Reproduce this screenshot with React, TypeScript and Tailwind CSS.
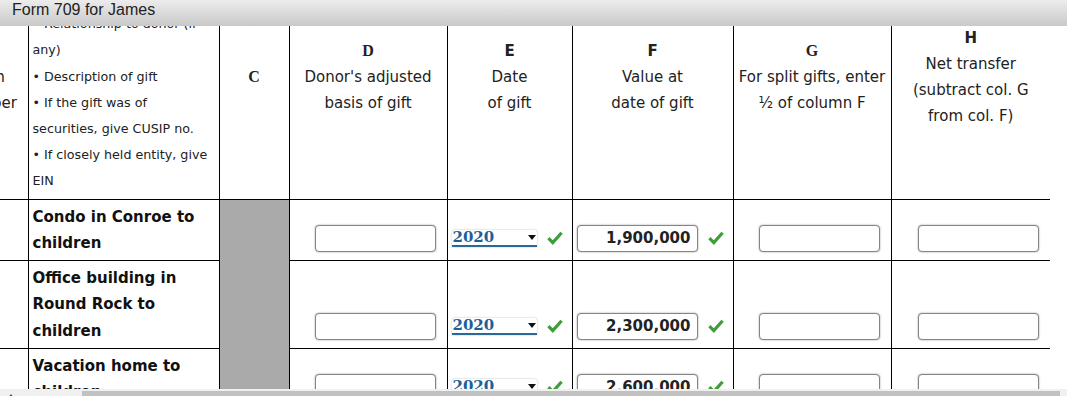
import React, { useLayoutEffect, useRef } from 'react';

type GiftRow = {
  lines: string[];
  value: string;
  height: string;
};

const gifts: GiftRow[] = [
  { lines: ['Condo in Conroe to', 'children'], value: '1,900,000', height: 'h-[61px]' },
  { lines: ['Office building in', 'Round Rock to', 'children'], value: '2,300,000', height: 'h-[88px]' },
  { lines: ['Vacation home to', 'children'], value: '2,600,000', height: 'h-[61px]' },
];

const Check = () => (
  <svg width="16" height="14" viewBox="0 0 16 14" className="shrink-0">
    <path d="M1.4 7.2 L5.8 11.6 L14.6 1.8" fill="none" stroke="#3f9d3a" strokeWidth="3.2" />
  </svg>
);

const Box = ({ value }: { value?: string }) => (
  <input
    readOnly
    value={value ?? ''}
    className="w-[121px] h-[27px] shrink-0 rounded-[4px] border border-[#858585] bg-white px-[6px] text-right text-[15px] font-bold text-[#222] shadow-[0_0_2px_rgba(0,0,0,0.4)] outline-none"
  />
);

const YearSelect = () => (
  <div className="flex w-[85px] h-[17px] shrink-0 items-center justify-between rounded-t-[3px] border-b-2 border-[#2b6797] bg-white shadow-[0_0_2px_rgba(0,0,0,0.3)]">
    <span className="pl-[1px] font-['DejaVu_Serif',serif] text-[15px] font-bold leading-none text-[#1d5f99]">
      2020
    </span>
    <svg width="8" height="5" viewBox="0 0 8 5" className="mr-[1px]">
      <path d="M0 0 H8 L4 5 Z" fill="#111" />
    </svg>
  </div>
);

const HeadCell = ({ letter, lines, serif }: { letter: string; lines: string[]; serif?: boolean }) => (
  <th className="border-b border-l border-black align-middle text-center font-normal text-[15px] leading-[26px] text-[#222]">
    <div
      className={
        serif
          ? "font-['Liberation_Serif',serif] text-[16px] font-bold"
          : 'font-bold'
      }
    >
      {letter}
    </div>
    {lines.map(l => (
      <div key={l} className="whitespace-nowrap">{l}</div>
    ))}
  </th>
);

export default function App() {
  const scroller = useRef<HTMLDivElement>(null);

  useLayoutEffect(() => {
    if (scroller.current) {
      scroller.current.scrollLeft = 52;
      scroller.current.scrollTop = 71;
    }
  }, []);

  return (
    <div className="h-[396px] w-[1067px] overflow-hidden bg-white font-['DejaVu_Sans',Verdana,sans-serif]">
      <div className="h-[26px] bg-linear-to-b from-[#ececec] to-[#c9c9c9] pl-[12px] font-['Liberation_Sans',Arial,sans-serif] text-[16px] leading-[20px] text-[#222]">
        Form 709 for James
      </div>

      <div ref={scroller} className="h-[363px] overflow-hidden">
        <div className="w-[1119px]">
          <table className="w-[1102px] table-fixed border-collapse">
            <colgroup>
              <col className="w-[80px]" />
              <col className="w-[191px]" />
              <col className="w-[70px]" />
              <col className="w-[158px]" />
              <col className="w-[125px]" />
              <col className="w-[161px]" />
              <col className="w-[158px]" />
              <col className="w-[159px]" />
            </colgroup>
            <thead>
              <tr className="h-[244px]">
                <th className="border-b border-black align-middle text-center font-normal text-[15px] leading-[26px] text-[#222]">
                  <div className="font-bold">A</div>
                  <div>Item</div>
                  <div>number</div>
                </th>
                <th className="border-b border-l border-black pl-[4px] align-middle text-left font-normal text-[12.7px] leading-[26.2px] text-[#222]">
                  <div className="text-center text-[15px] font-bold">B</div>
                  <div className="whitespace-nowrap">• Donee's name and address</div>
                  <div className="whitespace-nowrap">• Relationship to donor (if</div>
                  <div>any)</div>
                  <div className="whitespace-nowrap">• Description of gift</div>
                  <div className="whitespace-nowrap">• If the gift was of</div>
                  <div className="whitespace-nowrap">securities, give CUSIP no.</div>
                  <div className="whitespace-nowrap">• If closely held entity, give</div>
                  <div>EIN</div>
                </th>
                <HeadCell letter="C" lines={[]} serif />
                <HeadCell letter="D" lines={["Donor's adjusted", 'basis of gift']} serif />
                <HeadCell letter="E" lines={['Date', 'of gift']} />
                <HeadCell letter="F" lines={['Value at', 'date of gift']} />
                <HeadCell letter="G" lines={['For split gifts, enter', '½ of column F']} serif />
                <HeadCell letter="H" lines={['Net transfer', '(subtract col. G', 'from col. F)']} />
              </tr>
            </thead>
            <tbody>
              {gifts.map((g, i) => (
                <tr key={g.value} className={g.height}>
                  <td className="border-b border-black" />
                  <td className="border-b border-l border-black px-[4px] pt-[4px] pb-[3px] align-top text-[15px] font-bold leading-[26.5px] text-[#111]">
                    {g.lines.map(l => (
                      <div key={l} className="whitespace-nowrap">{l}</div>
                    ))}
                  </td>
                  {i === 0 && <td rowSpan={gifts.length} className="border-l border-black bg-[#aaaaaa]" />}
                  <td className="border-b border-l border-black pb-[8px] pl-[25px] align-bottom">
                    <Box />
                  </td>
                  <td className="border-b border-l border-black pb-[8px] pl-[4px] align-bottom">
                    <div className="flex h-[27px] items-center gap-[10px]">
                      <YearSelect />
                      <Check />
                    </div>
                  </td>
                  <td className="border-b border-l border-black pb-[8px] pl-[4px] align-bottom">
                    <div className="flex h-[27px] items-center gap-[10px]">
                      <Box value={g.value} />
                      <Check />
                    </div>
                  </td>
                  <td className="border-b border-l border-black pb-[8px] pl-[25px] align-bottom">
                    <Box />
                  </td>
                  <td className="border-b border-l border-black pb-[8px] pl-[26px] align-bottom">
                    <Box />
                  </td>
                </tr>
              ))}
            </tbody>
          </table>
        </div>
      </div>

      <div className="flex h-[17px] bg-[#f0f0f0]">
        <div className="flex w-[82px] justify-start pl-[8px] pt-[5px]">
          <svg width="6" height="8" viewBox="0 0 6 8">
            <path d="M3 0 L6 4 H0 Z" fill="#505050" />
          </svg>
        </div>
        <div className="mt-[2px] h-[11px] w-[978px] bg-[#c1c1c1]" />
      </div>
    </div>
  );
}
